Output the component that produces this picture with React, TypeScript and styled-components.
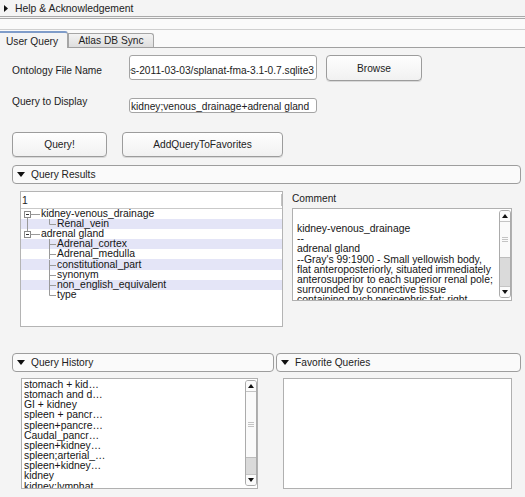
import React from 'react'
import styled, { createGlobalStyle } from 'styled-components'

const GlobalStyle = createGlobalStyle`
  html, body {
    margin: 0;
    padding: 0;
    background: #f4f4f4;
  }
  body {
    font-family: "Liberation Sans", Arial, sans-serif;
    color: #222;
  }
`

const uiFont = '10.2px'
const dataFont = '10.4px'

const Page = styled.div`
  width: 525px;
  height: 497px;
  overflow: hidden;
  background: #f4f4f4;
`

const HelpBar = styled.div`
  height: 16px;
  display: flex;
  align-items: center;
  gap: 7px;
  padding-left: 4px;
  font-size: 10.4px;
  border-bottom: 3px double #a9a9a9;
`

const Band = styled.div`
  height: 10px;
  background: #fafafa;
  border-bottom: 1px solid #cfcfcf;
`

const TabBar = styled.div`
  height: 17px;
  display: flex;
  align-items: flex-end;
  background: #fafafa;
  border-bottom: 1px solid #a0a0a0;
`

const Tab = styled.div<{ $active?: boolean; $width: number }>`
  width: ${p => p.$width}px;
  box-sizing: border-box;
  height: ${p => (p.$active ? 17 : 14)}px;
  margin-bottom: ${p => (p.$active ? -1 : 0)}px;
  display: flex;
  align-items: center;
  justify-content: ${p => (p.$active ? 'flex-start' : 'center')};
  padding-left: ${p => (p.$active ? 6 : 0)}px;
  padding-top: ${p => (p.$active ? 1 : 0)}px;
  white-space: nowrap;
  font-size: ${uiFont};
  color: #1e1e1e;
  background: ${p => (p.$active ? '#f4f4f4' : 'linear-gradient(#f3f3f3, #dedede)')};
  border-top: ${p => (p.$active ? '2px solid #7f9cc9' : '1px solid #a5a5a5')};
  border-right: 1px solid #a5a5a5;
  border-left: ${p => (p.$active ? 'none' : '1px solid #a5a5a5')};
  border-top-right-radius: 3px;
`

const Content = styled.div`
  padding: 0 4px 0 12px;
`

const FormRow = styled.div<{ $top: number; $height: number }>`
  display: flex;
  align-items: flex-start;
  margin-top: ${p => p.$top}px;
  height: ${p => p.$height}px;
`

const Label = styled.div<{ $top: number }>`
  width: 117px;
  font-size: ${uiFont};
  line-height: 12px;
  margin-top: ${p => p.$top}px;
`

const TextField = styled.div<{ $height: number }>`
  width: 188px;
  height: ${p => p.$height}px;
  box-sizing: border-box;
  border: 1px solid #a4a4a4;
  border-radius: 3px;
  background: #fff;
  display: flex;
  align-items: center;
  overflow: hidden;
  white-space: nowrap;
  font-size: ${uiFont};
  padding: 1px 2px 0 1px;
`

const PathField = styled(TextField)`
  justify-content: flex-end;
  padding-top: 5px;
`

const Button = styled.div<{ $width: number; $left?: number; $height?: number }>`
  width: ${p => p.$width}px;
  height: ${p => p.$height ?? 25}px;
  margin-left: ${p => p.$left ?? 0}px;
  box-sizing: border-box;
  border: 1px solid #9c9c9c;
  border-radius: 4px;
  background: linear-gradient(#fefefe, #f1f1f1);
  box-shadow: 0 1px 0 #d8d8d8;
  display: flex;
  align-items: center;
  justify-content: center;
  font-size: ${uiFont};
`

const ButtonRow = styled.div`
  display: flex;
  gap: 15px;
  margin-top: 19px;
  margin-bottom: 8px;
`

const SectionBar = styled.div<{ $width: number }>`
  width: ${p => p.$width}px;
  height: 19px;
  box-sizing: border-box;
  border: 1px solid #9d9d9d;
  border-radius: 4px;
  background: #fafafa;
  display: flex;
  align-items: center;
  gap: 6px;
  padding-left: 4px;
  font-size: ${uiFont};
`

const ResultsBody = styled.div`
  display: flex;
  gap: 9px;
  padding-left: 8px;
  margin-top: 7px;
  height: 136px;
`

const TreeBox = styled.div`
  width: 263px;
  height: 136px;
  box-sizing: border-box;
  border: 1px solid #b4b4b4;
  background: #fff;
`

const TreeHeader = styled.div`
  height: 17px;
  box-sizing: border-box;
  border-bottom: 1px solid #c9c9c9;
  padding: 2px 0;
`

const HeaderCell = styled.div`
  height: 12px;
  border-right: 1px solid #c2c2c2;
  padding-left: 1px;
  font-size: ${dataFont};
  line-height: 13px;
`

const TreeRow = styled.div<{ $striped: boolean }>`
  height: 10.1px;
  display: flex;
  align-items: center;
  background: ${p => (p.$striped ? '#e4e5f7' : 'transparent')};
  font-size: ${dataFont};
  line-height: 10px;
  color: #151515;
  white-space: nowrap;
`

const CommentColumn = styled.div`
  width: 220px;
  display: flex;
  flex-direction: column;
`

const CommentLabel = styled.div`
  font-size: ${uiFont};
  line-height: 15px;
  margin-bottom: 2px;
`

const ScrollBox = styled.div<{ $width: number; $height: number }>`
  width: ${p => p.$width}px;
  height: ${p => p.$height}px;
  box-sizing: border-box;
  border: 1px solid #b0b0b0;
  background: #fff;
  display: flex;
  overflow: hidden;
`

const ScrollText = styled.div<{ $padTop: number; $padLeft: number }>`
  flex: 1;
  overflow: hidden;
  padding: ${p => p.$padTop}px 0 0 ${p => p.$padLeft}px;
  font-size: ${dataFont};
  line-height: 10.15px;
  white-space: pre;
  color: #151515;
`

const ScrollBar = styled.div`
  width: 12px;
  box-sizing: border-box;
  margin: 1px 0 2px;
  border: 1px solid #ababab;
  border-radius: 3px;
  background: #f7f7f7;
  display: flex;
  flex-direction: column;
  overflow: hidden;
`

const ArrowCell = styled.div<{ $down?: boolean }>`
  height: 10px;
  flex: none;
  display: flex;
  align-items: center;
  justify-content: center;
  background: #fbfbfb;
  border-bottom: ${p => (p.$down ? 'none' : '1px solid #c4c4c4')};
  border-top: ${p => (p.$down ? '1px solid #c4c4c4' : 'none')};
`

const Thumb = styled.div<{ $size: number }>`
  height: ${p => p.$size}px;
  flex: none;
  display: flex;
  flex-direction: column;
  align-items: center;
  justify-content: center;
  gap: 1px;
  background: #fafafa;
  border-bottom: 1px solid #bdbdbd;
`

const Grip = styled.div`
  width: 6px;
  height: 1px;
  background: #c4c4c4;
`

const Track = styled.div`
  flex: 1;
  background: #dadada;
`

const Bottom = styled.div`
  display: flex;
  gap: 2px;
  margin-top: 26px;
`

const BottomColumn = styled.div`
  display: flex;
  flex-direction: column;
  gap: 6px;
`

const ListHolder = styled.div<{ $left: number }>`
  padding-left: ${p => p.$left}px;
`

const Arrow = ({ dir, w, h }: { dir: 'up' | 'down' | 'right'; w: number; h: number }) => {
  const pts =
    dir === 'up'
      ? `0,${h} ${w},${h} ${w / 2},0`
      : dir === 'down'
        ? `0,0 ${w},0 ${w / 2},${h}`
        : `0,0 ${w},${h / 2} 0,${h}`
  return (
    <svg width={w} height={h} viewBox={`0 0 ${w} ${h}`} style={{ display: 'block', flex: 'none' }}>
      <polygon points={pts} fill="#111" />
    </svg>
  )
}

const Scroller = ({ thumb }: { thumb: number }) => (
  <ScrollBar>
    <ArrowCell>
      <Arrow dir="up" w={6} h={4} />
    </ArrowCell>
    <Thumb $size={thumb}>
      <Grip />
      <Grip />
      <Grip />
    </Thumb>
    <Track />
    <ArrowCell $down>
      <Arrow dir="down" w={6} h={4} />
    </ArrowCell>
  </ScrollBar>
)

interface TreeNode {
  label: string
  root: boolean
  up?: boolean
  down?: boolean
  rootLine?: boolean
  last?: boolean
}

const treeRows: Array<TreeNode> = [
  { label: 'kidney-venous_drainage', root: true, down: true },
  { label: 'Renal_vein', root: false, rootLine: true, last: true },
  { label: 'adrenal gland', root: true, up: true },
  { label: 'Adrenal_cortex', root: false },
  { label: 'Adrenal_medulla', root: false },
  { label: 'constitutional_part', root: false },
  { label: 'synonym', root: false },
  { label: 'non_english_equivalent', root: false },
  { label: 'type', root: false, last: true },
]

const Guides = ({ node }: { node: TreeNode }) => {
  const stroke = '#9a9a9a'
  if (node.root) {
    return (
      <svg width={20} height={10} style={{ display: 'block', flex: 'none' }}>
        {node.up && <line x1={6.5} y1={0} x2={6.5} y2={2} stroke={stroke} />}
        {node.down && <line x1={6.5} y1={8} x2={6.5} y2={10} stroke={stroke} />}
        <rect x={3.5} y={2.5} width={6} height={6} fill="#fff" stroke="#8a8a8a" />
        <line x1={5} y1={5.5} x2={8} y2={5.5} stroke="#333" />
        <line x1={9.5} y1={5.5} x2={19} y2={5.5} stroke={stroke} />
      </svg>
    )
  }
  return (
    <svg width={36} height={10} style={{ display: 'block', flex: 'none' }}>
      {node.rootLine && <line x1={6.5} y1={0} x2={6.5} y2={10} stroke={stroke} />}
      <line x1={28.5} y1={0} x2={28.5} y2={node.last ? 5.5 : 10} stroke={stroke} />
      <line x1={28.5} y1={5.5} x2={35} y2={5.5} stroke={stroke} />
    </svg>
  )
}

const commentLines = [
  '',
  'kidney-venous_drainage',
  '--',
  'adrenal gland',
  "--Gray's 99:1900 - Small yellowish body,",
  'flat anteroposteriorly, situated immediately',
  'anterosuperior to each superior renal pole;',
  'surrounded by connective tissue',
  'containing much perinephric fat; right',
]

const historyItems = [
  'stomach + kid…',
  'stomach and d…',
  'GI + kidney',
  'spleen + pancr…',
  'spleen+pancre…',
  'Caudal_pancr…',
  'spleen+kidney…',
  'spleen;arterial_…',
  'spleen+kidney…',
  'kidney',
  'kidney;lymphat…',
]

export default function App() {
  return (
    <Page>
      <GlobalStyle />
      <HelpBar>
        <Arrow dir="right" w={4} h={7} />
        Help &amp; Acknowledgement
      </HelpBar>
      <Band />
      <TabBar>
        <Tab $active $width={68}>User Query</Tab>
        <Tab $width={86}>Atlas DB Sync</Tab>
      </TabBar>
      <Content>
        <FormRow $top={7} $height={26}>
          <Label $top={10}>Ontology File Name</Label>
          <PathField $height={25}>files-2011-03-03/splanat-fma-3.1-0.7.sqlite3</PathField>
          <Button $width={96} $left={9} $height={26}>Browse</Button>
        </FormRow>
        <FormRow $top={17} $height={15}>
          <Label $top={-2}>Query to Display</Label>
          <TextField $height={15}>kidney;venous_drainage+adrenal gland</TextField>
        </FormRow>
        <ButtonRow>
          <Button $width={95}>Query!</Button>
          <Button $width={161}>AddQueryToFavorites</Button>
        </ButtonRow>
        <SectionBar $width={509}>
          <Arrow dir="down" w={8} h={5} />
          Query Results
        </SectionBar>
        <ResultsBody>
          <TreeBox>
            <TreeHeader>
              <HeaderCell>1</HeaderCell>
            </TreeHeader>
            {treeRows.map((node, i) => (
              <TreeRow key={i} $striped={i % 2 === 1}>
                <Guides node={node} />
                {node.label}
              </TreeRow>
            ))}
          </TreeBox>
          <CommentColumn>
            <CommentLabel>Comment</CommentLabel>
            <ScrollBox $width={220} $height={93}>
              <ScrollText $padTop={5} $padLeft={4}>{commentLines.join('\n')}</ScrollText>
              <Scroller thumb={35} />
            </ScrollBox>
          </CommentColumn>
        </ResultsBody>
        <Bottom>
          <BottomColumn>
            <SectionBar $width={262}>
              <Arrow dir="down" w={8} h={5} />
              Query History
            </SectionBar>
            <ListHolder $left={9}>
              <ScrollBox $width={237} $height={111}>
                <ScrollText $padTop={1} $padLeft={2}>{historyItems.join('\n')}</ScrollText>
                <Scroller thumb={65} />
              </ScrollBox>
            </ListHolder>
          </BottomColumn>
          <BottomColumn>
            <SectionBar $width={245}>
              <Arrow dir="down" w={8} h={5} />
              Favorite Queries
            </SectionBar>
            <ListHolder $left={7}>
              <ScrollBox $width={229} $height={111} />
            </ListHolder>
          </BottomColumn>
        </Bottom>
      </Content>
    </Page>
  )
}
